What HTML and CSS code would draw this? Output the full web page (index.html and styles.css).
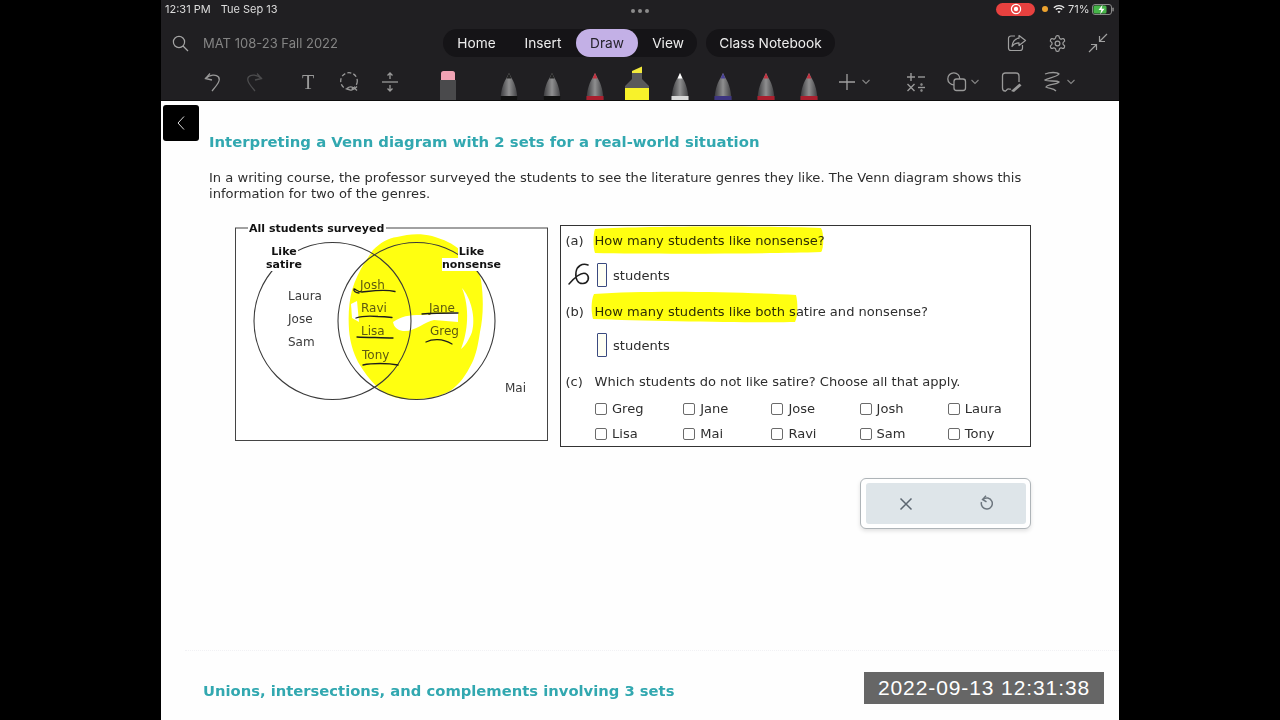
FILE: index.html
```html
<!DOCTYPE html>
<html lang="en">
<head>
    <meta charset="UTF-8">
    <meta name="viewport" content="width=device-width, initial-scale=1.0">
    <title>MAT 108-23 Fall 2022</title>
    <link rel="stylesheet" href="styles.css">
</head>
<body>
    <svg class="defs" aria-hidden="true">
        <defs>
            <linearGradient id="penBody" x1="0" x2="1" y1="0" y2="0">
                <stop offset="0" stop-color="#3a3a3d"/>
                <stop offset="0.5" stop-color="#8f8f90"/>
                <stop offset="1" stop-color="#3f3f42"/>
            </linearGradient>
            <symbol id="pen" viewBox="0 0 18 27">
                <path d="M9 0 L11 4 C14 9 17 15 17.5 27 L0.5 27 C1 15 4 9 7 4 Z" fill="url(#penBody)"/>
                <path d="M9 0 L11.4 5.5 L6.6 5.5 Z" fill="var(--tip)"/>
                <rect x="0.5" y="23" width="17" height="4" fill="var(--band)"/>
            </symbol>
        </defs>
    </svg>

    <div class="screen">
        <header class="app-header">
            <div class="status-bar">
                <span class="status-time">12:31 PM</span>
                <span class="status-date">Tue Sep 13</span>
                <div class="multitask-dots"><i></i><i></i><i></i></div>
                <div class="status-right">
                    <div class="record-pill">
                        <svg width="12" height="12" viewBox="0 0 12 12"><circle cx="6" cy="6" r="4.6" fill="none" stroke="#fff" stroke-width="1.2"/><circle cx="6" cy="6" r="2.2" fill="#fff"/></svg>
                    </div>
                    <i class="mic-dot"></i>
                    <svg class="wifi" width="12" height="10" viewBox="0 0 14 11" fill="none" stroke="#eee" stroke-width="1.6"><path d="M1 4 C4.5 0.8 9.5 0.8 13 4"/><path d="M3.2 6.2 C5.3 4.4 8.7 4.4 10.8 6.2"/><path d="M7 10.4 L5.2 8.4 C6.2 7.6 7.8 7.6 8.8 8.4 Z" fill="#eee" stroke="none"/></svg>
                    <span class="battery-text">71%</span>
                    <svg width="22" height="11" viewBox="0 0 22 11"><rect x="0.5" y="0.5" width="19" height="10" rx="2.5" fill="none" stroke="#888"/><rect x="1.5" y="1.5" width="13" height="8" rx="1.5" fill="#46b549"/><rect x="20.3" y="3.5" width="1.5" height="4" rx="0.7" fill="#888"/><path d="M10.5 0.8 L6.5 6 L9.3 6 L8.2 10.2 L12.6 4.8 L9.7 4.8 Z" fill="#fff"/></svg>
                </div>
            </div>

            <div class="nav-row">
                <div class="search">
                    <svg width="17" height="17" viewBox="0 0 17 17" fill="none" stroke="#a5a5a5" stroke-width="1.2"><circle cx="7" cy="7" r="5.6"/><path d="M11 11 L16 16"/></svg>
                    <span>MAT 108-23 Fall 2022</span>
                </div>
                <nav class="tabs">
                    <a class="tab tab-home">Home</a>
                    <a class="tab tab-insert">Insert</a>
                    <a class="tab tab-draw">Draw</a>
                    <a class="tab tab-view">View</a>
                </nav>
                <a class="tab-notebook">Class Notebook</a>
                <div class="nav-actions">
                    <svg width="20" height="18" viewBox="0 0 20 18" fill="none" stroke="#a0a0a0" stroke-width="1.2" stroke-linejoin="round"><path d="M8 2 H4 C2.5 2 1.5 3 1.5 4.5 V14 C1.5 15.500 2.500 16.500 4 16.500 H13 C14.500 16.500 15.500 15.500 15.500 14 V11"/><path d="M12 1.500 L18.500 6.500 L12 11.500 V8.800 C9 8.800 6.500 10 5 12.500 C5.500 8 8 4.600 12 4.200 Z"/></svg>
                    <svg width="19" height="19" viewBox="0 0 24 24" fill="none" stroke="#a0a0a0" stroke-width="1.5"><path d="M12.22 2h-.44a2 2 0 0 0-2 2v.18a2 2 0 0 1-1 1.730l-.43.25a2 2 0 0 1-2 0l-.15-.08a2 2 0 0 0-2.730.73l-.22.38a2 2 0 0 0 .73 2.730l.15.1a2 2 0 0 1 1 1.720v.51a2 2 0 0 1-1 1.740l-.15.09a2 2 0 0 0-.73 2.730l.22.38a2 2 0 0 0 2.730.73l.15-.08a2 2 0 0 1 2 0l.43.25a2 2 0 0 1 1 1.730V20a2 2 0 0 0 2 2h.44a2 2 0 0 0 2-2v-.18a2 2 0 0 1 1-1.730l.43-.25a2 2 0 0 1 2 0l.15.08a2 2 0 0 0 2.730-.73l.22-.39a2 2 0 0 0-.73-2.730l-.15-.08a2 2 0 0 1-1-1.740v-.5a2 2 0 0 1 1-1.740l.15-.09a2 2 0 0 0 .73-2.730l-.22-.38a2 2 0 0 0-2.730-.73l-.15.08a2 2 0 0 1-2 0l-.43-.25a2 2 0 0 1-1-1.730V4a2 2 0 0 0-2-2z"/><circle cx="12" cy="12" r="3"/></svg>
                    <svg width="20" height="20" viewBox="0 0 20 20" fill="none" stroke="#a0a0a0" stroke-width="1.2"><path d="M19 1 L11.500 8.500 M11.500 3 V8.500 H17"/><path d="M1 19 L8.500 11.500 M3 11.500 H8.500 V17"/></svg>
                </div>
            </div>

            <div class="tool-row">
                <svg class="tool" width="24" height="24" viewBox="0 0 24 24" fill="none" stroke="#999" stroke-width="1.3"><path d="M9 3.500 L4.500 8.500 L11 10"/><path d="M4.500 8.500 C9 4.500 15 4 17.500 7 C20 10.500 16 15 11 21"/></svg>
                <svg class="tool dim" width="24" height="24" viewBox="0 0 24 24" fill="none" stroke="#4c4c4e" stroke-width="1.3"><path d="M15 3.500 L19.500 8.500 L13 10"/><path d="M19.500 8.500 C15 4.500 9 4 6.500 7 C4 10.500 8 15 13 21"/></svg>
                <span class="tool tool-text">T</span>
                <svg class="tool" width="24" height="24" viewBox="0 0 24 24" fill="none" stroke="#999" stroke-width="1.3"><circle cx="12" cy="11" r="8.300" stroke-dasharray="4 2.200"/><path d="M10 18.500 C13 15.500 17 17 20 20.500 M10 18.500 C13 21.500 17 20 20 16.500"/></svg>
                <svg class="tool" width="24" height="24" viewBox="0 0 24 24" fill="none" stroke="#999" stroke-width="1.3"><path d="M4 12 H20"/><path d="M12 9 V3 M9.500 5.500 L12 3 L14.500 5.500"/><path d="M12 15 V21 M9.500 18.500 L12 21 L14.500 18.500"/></svg>

                <svg class="eraser" width="16" height="30" viewBox="0 0 16 30"><rect x="1" y="1" width="14" height="11" rx="2.500" fill="#f0a3b4"/><rect y="10" width="16" height="20" fill="#4a4a4c"/></svg>

                <div class="pens">
                    <svg class="pen pen-black"><use href="#pen"/></svg>
                    <svg class="pen pen-black"><use href="#pen"/></svg>
                    <svg class="pen pen-red"><use href="#pen"/></svg>
                    <svg class="marker" width="24" height="34" viewBox="0 0 24 34"><path d="M7 5 L17 0.500 V7 H7 Z" fill="#f2e93c"/><path d="M7 7 H17 V13 L24 20 V34 H0 V20 L7 13 Z" fill="#59595b"/><rect y="22" width="24" height="12" fill="#f8f22a"/></svg>
                    <svg class="pen pen-white"><use href="#pen"/></svg>
                    <svg class="pen pen-purple"><use href="#pen"/></svg>
                    <svg class="pen pen-red"><use href="#pen"/></svg>
                    <svg class="pen pen-red"><use href="#pen"/></svg>
                </div>

                <svg class="tool tool-plus" width="24" height="24" viewBox="0 0 24 24" fill="none" stroke="#a0a0a0" stroke-width="1.3"><path d="M12 4 V20 M4 12 H20"/></svg>
                <svg class="tool chevron" width="8" height="6" viewBox="0 0 8 6" fill="none" stroke="#858585" stroke-width="1.100"><path d="M0.500 1 L4 4.500 L7.500 1"/></svg>

                <svg class="tool tool-math" width="24" height="24" viewBox="0 0 24 24" fill="none" stroke="#999" stroke-width="1.400"><path d="M8 3 V11 M4 7 H12"/><path d="M15 7 H22"/><path d="M4.500 14 L11.500 21 M11.500 14 L4.500 21"/><path d="M15 17.500 H22"/><circle cx="18.500" cy="14.500" r="0.500"/><circle cx="18.500" cy="20.500" r="0.500"/></svg>
                <svg class="tool tool-shapes" width="24" height="24" viewBox="0 0 24 24" fill="none" stroke="#999" stroke-width="1.300"><path d="M9 14.800 A6 6 0 1 1 14.800 9"/><rect x="9" y="9" width="11.500" height="11.500" rx="2.500"/></svg>
                <svg class="tool chevron" width="8" height="6" viewBox="0 0 8 6" fill="none" stroke="#858585" stroke-width="1.100"><path d="M0.500 1 L4 4.500 L7.500 1"/></svg>
                <svg class="tool tool-note" width="24" height="24" viewBox="0 0 24 24" fill="none" stroke="#999" stroke-width="1.300"><path d="M7 21 H6 C4 21 3.500 20 3.500 18 V6 C3.500 4 4.500 3 6.500 3 H17 C19 3 20 4 20 6 V12"/><path d="M7 21 C9 17 10 20 12 19"/><path d="M12 21 L20.500 13.500 L22.500 15.500 L15 22 Z" fill="#999" stroke="none"/></svg>
                <svg class="tool tool-squiggle" width="24" height="24" viewBox="0 0 24 24" fill="none" stroke="#999" stroke-width="1.300"><path d="M5 4 C10 2 17 2 19 4 C17 7 8 8 5 10 C8 12 17 10 19 12 C16 15 8 14 6 17 C9 19 13 18 16 21"/></svg>
                <svg class="tool chevron" width="8" height="6" viewBox="0 0 8 6" fill="none" stroke="#858585" stroke-width="1.100"><path d="M0.500 1 L4 4.500 L7.500 1"/></svg>
            </div>
        </header>

        <main class="page">
            <a class="back-btn">
                <svg width="10" height="16" viewBox="0 0 10 16" fill="none" stroke="#ddd" stroke-width="1"><path d="M8 1.500 L2 8 L8 14.500"/></svg>
            </a>

            <h1 class="title">Interpreting a Venn diagram with 2 sets for a real-world situation</h1>
            <p class="intro">In a writing course, the professor surveyed the students to see the literature genres they like. The Venn diagram shows this information for two of the genres.</p>

            <div class="exercise">
                <svg class="venn" width="314" height="222" viewBox="235 220 314 222">
                    <rect x="235.500" y="228" width="312" height="212.500" fill="#fff" stroke="#444"/>
                    <path class="venn-yellow" d="M373 250 C380 243 388 238 397 237 C408 234 420 233 432 236 C445 240 452 243 460 250 C470 258 478 268 481 280 C484 300 483 318 480 332 C478 345 476 355 472 363 C466 375 460 384 450 391 C440 397 425 400 405 399 C392 398 384 394 377 387 C370 380 364 372 358 362 C353 352 350 342 349 330 C348 315 349 302 352 290 C355 280 360 270 365 262 Z"/>
                    <g class="venn-gaps">
                        <path d="M351 304 L357 301 L359 322 L352 318 Z"/>
                        <path d="M393 322 C402 316 408 315 421 315 L458 312 L458 322 L434 320 C424 322 415 332 403 331 C397 330 394 327 393 322 Z"/>
                        <path d="M462 288 C471 298 476 318 472 332 C469 340 465 346 461 349 C468 332 470 308 462 288 Z"/>
                    </g>
                    <circle class="venn-ring" cx="332.500" cy="321" r="78.500"/>
                    <circle class="venn-ring" cx="416.500" cy="321" r="78.500"/>

                    <rect x="248" y="222" width="138" height="12" fill="#fff"/>
                    <rect x="271" y="245" width="27" height="13" fill="#fff"/>
                    <rect x="266" y="258" width="37" height="13" fill="#fff"/>
                    <rect x="458" y="245" width="27" height="13" class="label-bg"/>
                    <rect x="442" y="258" width="60" height="13" class="label-bg"/>

                    <text class="venn-label" x="249" y="232">All students surveyed</text>
                    <text class="venn-label mid" x="284" y="255">Like</text>
                    <text class="venn-label mid" x="284" y="268">satire</text>
                    <text class="venn-label mid" x="471.500" y="255">Like</text>
                    <text class="venn-label mid" x="471.500" y="268">nonsense</text>

                    <text class="venn-name" x="288" y="300">Laura</text>
                    <text class="venn-name" x="288" y="323">Jose</text>
                    <text class="venn-name" x="288" y="346">Sam</text>
                    <text class="venn-name on-ink" x="360" y="289">Josh</text>
                    <text class="venn-name on-ink" x="361" y="312">Ravi</text>
                    <text class="venn-name on-ink" x="361" y="335">Lisa</text>
                    <text class="venn-name on-ink" x="362" y="359">Tony</text>
                    <text class="venn-name on-ink" x="429" y="312">Jane</text>
                    <text class="venn-name on-ink" x="430" y="335">Greg</text>
                    <text class="venn-name" x="505" y="392">Mai</text>

                    <g class="pen-ink">
                        <path d="M359 293 C356 293 353 291 354 289 C356 289 357 292 362 292 C372 291 384 289 395 291.500"/>
                        <path d="M356 318 C362 316 372 316 378 316.500 C384 316.500 388 317 392 317.500"/>
                        <path d="M357 337 C368 337.500 382 337.500 393 338"/>
                        <path d="M363 365 C372 363 388 363 398 365"/>
                        <path d="M422 314 C434 313 446 313 458 313"/>
                        <path d="M426 342 C432 339 442 338 452 344"/>
                    </g>
                </svg>

                <section class="questions">
                    <div class="q-row q-a"><span class="q-tag">(a)</span>How many students like nonsense?</div>
                    <div class="q-row q-answer q-answer-a"><input class="answer-box" type="text" aria-label="Answer a"><span>students</span></div>
                    <div class="q-row q-b"><span class="q-tag">(b)</span>How many students like both satire and nonsense?</div>
                    <div class="q-row q-answer q-answer-b"><input class="answer-box" type="text" aria-label="Answer b"><span>students</span></div>
                    <div class="q-row q-c"><span class="q-tag">(c)</span>Which students do not like satire? Choose all that apply.</div>
                    <div class="choices">
                        <label class="choice"><input type="checkbox">Greg</label>
                        <label class="choice"><input type="checkbox">Jane</label>
                        <label class="choice"><input type="checkbox">Jose</label>
                        <label class="choice"><input type="checkbox">Josh</label>
                        <label class="choice"><input type="checkbox">Laura</label>
                        <label class="choice"><input type="checkbox">Lisa</label>
                        <label class="choice"><input type="checkbox">Mai</label>
                        <label class="choice"><input type="checkbox">Ravi</label>
                        <label class="choice"><input type="checkbox">Sam</label>
                        <label class="choice"><input type="checkbox">Tony</label>
                    </div>

                    <!-- highlighter and pen marks on top of the questions -->
                    <svg class="q-ink" width="471" height="222" viewBox="560 225 471 222">
                        <path class="hl" d="M595 229 C650 226 760 226 821 228 C824 233 824 248 821 252 C760 254 650 254 595 253 C593 248 593 234 595 229 Z"/>
                        <path class="hl" d="M594 294 C650 290 740 292 796 295 C798 303 798 316 795 322 C760 323 650 321 593 319 C591 312 591 300 594 294 Z"/>
                    </svg>
                    <svg class="q-pen" width="471" height="222" viewBox="560 225 471 222">
                        <path class="pen-ink thick" d="M588 265 C582 263 577 266 576 272 C575 279 578 284 583 283.500 C588 283 590 278 587 274.500 C583 271 577 275 569 284"/>
                    </svg>
                </section>
            </div>

            <div class="check-tray">
                <div class="check-buttons">
                    <svg width="14" height="14" viewBox="0 0 14 14" fill="none" stroke="#5c6670" stroke-width="1.500"><path d="M1.500 1.500 L12.500 12.500 M12.500 1.500 L1.500 12.500"/></svg>
                    <svg width="14" height="17" viewBox="0 0 14 17" fill="none" stroke="#6d767e" stroke-width="1.500"><path d="M4 4.500 A5.500 5.500 0 1 1 2.500 7"/><path d="M7 0.800 L3.600 4.500 L7.500 6.800"/></svg>
                </div>
            </div>

            <footer class="next-section">
                <h2 class="next-title">Unions, intersections, and complements involving 3 sets</h2>
            </footer>

            <div class="timestamp">2022-09-13 12:31:38</div>
        </main>
    </div>
</body>
</html>
```

FILE: styles.css
```css
* { margin: 0; padding: 0; box-sizing: border-box; }
body {
    background: #000;
    width: 1280px;
    height: 720px;
    overflow: hidden;
    font-family: "DejaVu Sans", Verdana, sans-serif;
}

.defs {
    position: absolute;
    width: 0;
    height: 0;
}

.screen {
    width: 958px;
    height: 720px;
    margin-left: 161px;
    display: flex;
    flex-direction: column;
}

/* ---- app chrome ---- */
.app-header {
    height: 101px;
    background: #201f22;
    border-bottom: 1px solid #0d0d0d;
    font-family: Inter, "Liberation Sans", sans-serif;
    color: #eee;
}

.status-bar {
    height: 18px;
    display: flex;
    align-items: center;
    padding-left: 4px;
    padding-right: 5px;
    font-size: 11px;
    color: #ddd;
}

.status-date { margin-left: 10px; }

.multitask-dots {
    display: flex;
    gap: 2.500px;
    margin-left: 353px;
    margin-top: 4px;
}

.multitask-dots i {
    width: 4.500px;
    height: 4.500px;
    border-radius: 50%;
    background: #8b8b8b;
}

.status-right {
    margin-left: auto;
    display: flex;
    align-items: center;
}

.record-pill {
    width: 39px;
    height: 13px;
    border-radius: 7px;
    background: #e8413f;
    display: flex;
    align-items: center;
    justify-content: center;
}

.mic-dot {
    width: 6px;
    height: 6px;
    margin-left: 7px;
    border-radius: 50%;
    background: #eda32f;
}

.wifi { margin-left: 5px; }

.battery-text {
    width: 24px;
    margin-left: 3px;
    font-size: 11px;
}

.nav-row {
    height: 50px;
    display: flex;
    align-items: center;
}

.search {
    width: 282px;
    padding-left: 11px;
    display: flex;
    align-items: center;
    gap: 14px;
    font-size: 13px;
    color: #848484;
}

.tabs {
    display: flex;
    gap: 1px;
    height: 28px;
    border-radius: 14px;
    background: #151417;
    font-size: 13.700px;
}

.tab {
    border-radius: 14px;
    line-height: 28px;
    text-align: center;
}

.tab-home { width: 67px; }
.tab-insert { width: 64px; }
.tab-view { width: 58px; }

.tab-draw {
    width: 62px;
    background: #c3b0e6;
    color: #26232c;
}

.tab-notebook {
    width: 129px;
    height: 28px;
    margin-left: 9px;
    border-radius: 14px;
    background: #151417;
    font-size: 13.700px;
    line-height: 28px;
    text-align: center;
}

.nav-actions {
    display: flex;
    align-items: center;
    gap: 21px;
    margin-left: 172px;
}

.tool-row {
    height: 32px;
    padding-left: 40px;
    display: flex;
    align-items: center;
}

.tool {
    flex: none;
    margin-bottom: 4px;
    margin-right: 17px;
}

.tool-text {
    width: 24px;
    margin-left: 13px;
    font-family: "Liberation Serif", serif;
    font-size: 20px;
    line-height: 24px;
    color: #999;
    text-align: center;
}

.eraser {
    flex: none;
    align-self: flex-end;
    margin-left: 21px;
}

.pens {
    flex: none;
    width: 342.400px;
    margin-left: 31.600px;
    margin-right: 5px;
    align-self: flex-end;
    display: grid;
    grid-template-columns: repeat(8, 1fr);
    justify-items: center;
    align-items: end;
}

.pen {
    width: 18px;
    height: 27px;
    display: block;
}

.marker { display: block; }

.pen-black { --tip: #222; --band: #111; }
.pen-red { --tip: #c5303f; --band: #a91f2e; }
.pen-white { --tip: #fff; --band: #d9d9d9; }
.pen-purple { --tip: #4a4298; --band: #3d3580; }

.tool-plus { margin-right: 3px; }
.chevron { margin-right: 0; }
.tool-math { margin-left: 33px; margin-right: 18px; }
.tool-shapes { margin-right: 2px; }
.tool-note { margin-left: 20px; }
.tool-squiggle { margin-right: 3px; }

/* ---- lesson page ---- */
.page {
    position: relative;
    flex: 1;
    display: flex;
    flex-direction: column;
    padding: 32px 88px 0 48px;
    background: #fefefe;
    color: #2e2e2e;
}

.back-btn {
    position: absolute;
    left: 2px;
    top: 4px;
    width: 36px;
    height: 36px;
    border-radius: 3px;
    background: #000;
    display: flex;
    align-items: center;
    justify-content: center;
}

.title {
    font-size: 14.850px;
    line-height: 18px;
    font-weight: bold;
    color: #32a8b0;
}

.intro {
    margin-top: 19px;
    font-size: 13.100px;
    line-height: 16px;
}

.exercise {
    margin-top: 23px;
    display: flex;
    gap: 11px;
}

.venn {
    flex: none;
    margin-left: 26px;
    margin-top: -5px;
    margin-bottom: -3px;
}

.venn-yellow { fill: #ffff10; }
.venn-gaps path { fill: #fff; }
.label-bg { fill: #fff; }

.venn-ring {
    fill: none;
    stroke: #3a3a3a;
    stroke-width: 1.100;
}

.venn-label {
    font-size: 11px;
    font-weight: bold;
    fill: #111;
}

.mid { text-anchor: middle; }

.venn-name {
    font-size: 12px;
    fill: #3a3a3a;
}

.on-ink { fill: #5e5a10; }

.pen-ink {
    fill: none;
    stroke: #1d1d1d;
    stroke-width: 1.300;
    stroke-linecap: round;
}

.questions {
    position: relative;
    flex: none;
    width: 471px;
    height: 222px;
    border: 1px solid #333;
    background: #fff;
    font-size: 13.050px;
}

.q-row {
    display: flex;
    align-items: center;
    padding-left: 33.500px;
}

.q-tag {
    width: 29px;
    margin-left: -29px;
}

.q-a { height: 28px; }
.q-answer-a { height: 42px; }
.q-b { height: 30px; }
.q-answer-b { height: 38px; }
.q-c { height: 35px; }

.q-answer { padding-left: 36px; gap: 6px; }

.answer-box {
    width: 10px;
    height: 24px;
    border: 1px solid #3b4a80;
    border-radius: 1px;
    background: #fffff4;
}

.choices {
    margin-top: -3px;
    padding-left: 34px;
    display: grid;
    grid-template-columns: repeat(5, 88.200px);
    grid-auto-rows: 25px;
}

.choice {
    display: flex;
    align-items: center;
    gap: 5px;
}

.choice input {
    appearance: none;
    width: 12px;
    height: 12px;
    border: 1px solid #6b6b6b;
    border-radius: 2px;
    background: #fff;
    margin-top: 1px;
}

.q-ink, .q-pen {
    position: absolute;
    left: -1px;
    top: -1px;
    pointer-events: none;
}

.q-ink { mix-blend-mode: multiply; }
.hl { fill: #ffff10; }
.thick { stroke-width: 1.500; }

.check-tray {
    align-self: flex-end;
    width: 171px;
    height: 51px;
    margin-top: 31px;
    padding: 4px 4px 4px 5px;
    border: 1px solid #aeb4b8;
    border-radius: 6px;
    background: #fff;
    box-shadow: 0 2px 4px rgba(0,0,0,0.12);
}

.check-buttons {
    height: 100%;
    display: flex;
    align-items: center;
    justify-content: space-around;
    border-radius: 3px;
    background: #dee5e9;
}

.next-section {
    margin-top: auto;
    margin-left: -24px;
    margin-right: -88px;
    padding: 31px 0 20px 18px;
    border-top: 1px dotted #f1f1f4;
}

.next-title {
    font-size: 14.750px;
    line-height: 18px;
    font-weight: bold;
    color: #32a8b0;
}

.timestamp {
    position: absolute;
    left: 703px;
    top: 571px;
    width: 240px;
    height: 32px;
    background: #666;
    color: #fff;
    font-family: "Liberation Sans", sans-serif;
    font-size: 21px;
    letter-spacing: 0.900px;
    line-height: 32px;
    text-align: center;
}
```
